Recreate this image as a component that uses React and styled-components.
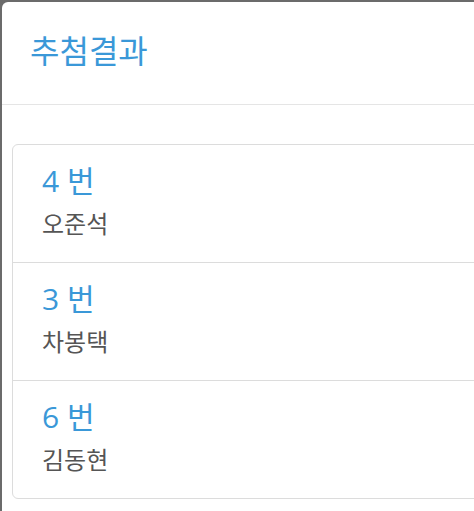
import React from 'react'
import styled, { createGlobalStyle } from 'styled-components'

const Global = createGlobalStyle`
  html, body { margin: 0; padding: 0; background: #6b6b6b; }
  body { font-family: "Open Sans", "Noto Sans CJK KR", sans-serif; overflow: hidden; }
`

const Backdrop = styled.div`
  width: 474px; height: 511px;
  padding: 2px 0 0 2px;
  box-sizing: border-box;
  overflow: hidden;
`

const Modal = styled.div`
  width: 540px; height: 560px;
  background: #fff;
  border-radius: 6px;
`

const Header = styled.div`
  height: 102px;
  padding: 0 28px;
  display: flex; align-items: center;
  border-bottom: 1px solid #e5e5e5;
`

const Title = styled.h4`
  margin: 0;
  font-size: 32px; font-weight: 400;
  color: #3a98d8;
  line-height: 1;
  position: relative; top: -2px;
`

const Body = styled.div`
  padding: 39px 0 0 10px;
`

const List = styled.div`
  border: 1px solid #dcdcdc;
  border-radius: 6px;
`

const Item = styled.div`
  height: ${p => (p.first ? '117px' : '118px')};
  box-sizing: border-box;
  padding: 18px 29px 0;
  border-top: ${p => (p.first ? 'none' : '1px solid #dcdcdc')};
`

const Heading = styled.div`
  font-size: 30px;
  color: #3a98d8;
  line-height: 36px;
`

const Name = styled.div`
  font-size: 24px;
  color: #555;
  line-height: 30px;
  margin-top: 10px;
`

const results = [
  { no: 4, name: '오준석' },
  { no: 3, name: '차봉택' },
  { no: 6, name: '김동현' },
]

export default function App() {
  return (
    <>
      <Global />
      <Backdrop>
        <Modal>
          <Header>
            <Title>추첨결과</Title>
          </Header>
          <Body>
            <List>
              {results.map((r, i) => (
                <Item key={r.no} first={i === 0}>
                  <Heading>{r.no} 번</Heading>
                  <Name>{r.name}</Name>
                </Item>
              ))}
            </List>
          </Body>
        </Modal>
      </Backdrop>
    </>
  )
}
